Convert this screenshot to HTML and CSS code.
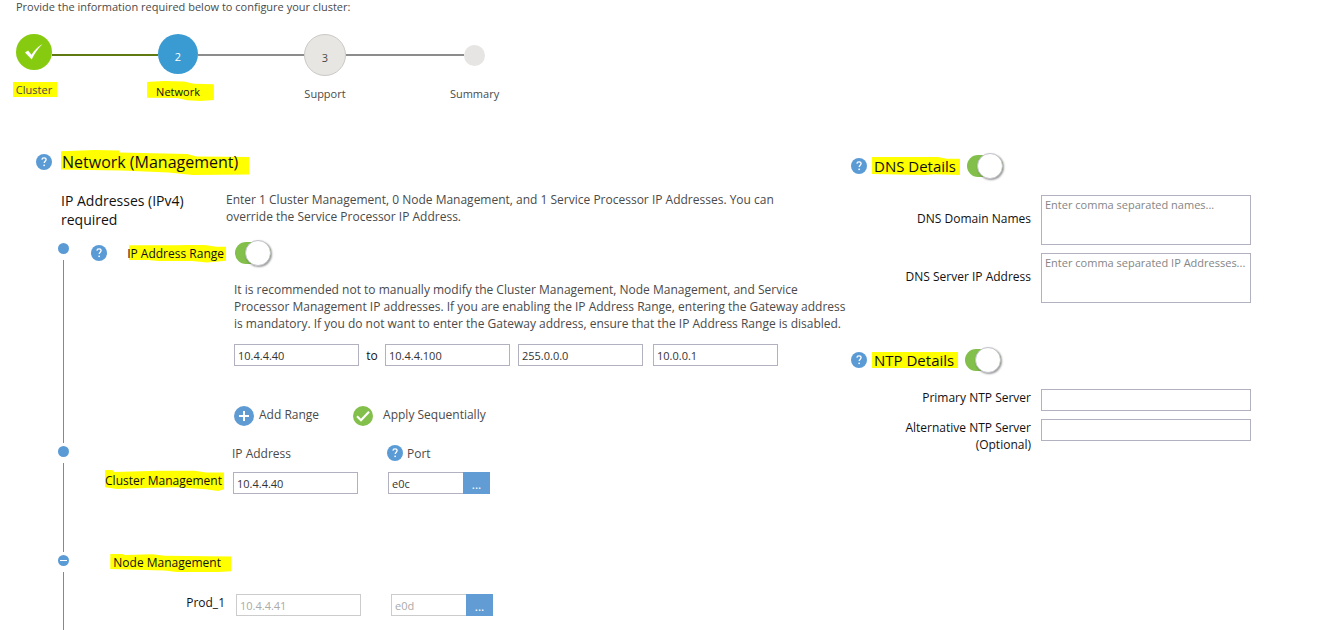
FILE: index.html
```html
<!DOCTYPE html>
<html lang="en">
<head>
    <meta charset="UTF-8">
    <meta name="viewport" content="width=device-width, initial-scale=1.0">
    <title>Cluster Setup - Network</title>
    <link rel="stylesheet" href="styles.css">
</head>
<body>
    <svg width="0" height="0" class="sprite" aria-hidden="true">
        <symbol id="icon-help" viewBox="0 0 16 16">
            <circle cx="8" cy="8" r="8" fill="#5b9bd5"/>
            <path d="M5.9 5.6C6 4.4 6.9 3.8 8 3.8s2.1.7 2.1 1.8c0 1.5-1.9 1.7-1.9 3.4" fill="none" stroke="#fff" stroke-width="1.3"/>
            <rect x="7.4" y="10.6" width="1.5" height="1.5" fill="#fff"/>
        </symbol>
    </svg>

    <p class="intro">Provide the information required below to configure your cluster:</p>

    <ol class="stepper">
        <li>
            <span class="step step-done">
                <svg width="36" height="36" viewBox="0 0 36 36" aria-hidden="true">
                    <path d="M9 18.500l3-2 3.500 4.200C18 16.500 21.500 13 26.500 10 22 14.500 18.500 19.500 15.700 25.500z" fill="#fff"/>
                </svg>
            </span>
            <span class="step-label"><mark class="hl hl-cluster">Cluster</mark></span>
        </li>
        <li>
            <span class="step-line step-line-done"></span>
            <span class="step step-current">2</span>
            <span class="step-label step-label-current"><mark class="hl hl-network">Network</mark></span>
        </li>
        <li>
            <span class="step-line"></span>
            <span class="step step-next">3</span>
            <span class="step-label step-label-next">Support</span>
        </li>
        <li>
            <span class="step-line"></span>
            <span class="step step-last"></span>
            <span class="step-label step-label-next">Summary</span>
        </li>
    </ol>

    <main>
        <section class="management">
            <h2>
                <svg class="help" width="16" height="16"><use href="#icon-help"/></svg>
                <mark class="hl hl-management">Network (Management)</mark>
            </h2>

            <div class="requirements">
                <h3>IP Addresses (IPv4) required</h3>
                <p>Enter 1 Cluster Management, 0 Node Management, and 1 Service Processor IP Addresses. You can override the Service Processor IP Address.</p>
            </div>

            <ol class="timeline">
                <li class="range">
                    <span class="track"><span class="dot"></span></span>
                    <div class="range-head">
                        <svg class="help" width="16" height="16"><use href="#icon-help"/></svg>
                        <label for="ip-range"><mark class="hl hl-range">IP Address Range</mark></label>
                        <input type="checkbox" class="toggle" id="ip-range" checked>
                    </div>
                    <div class="range-body">
                        <p>It is recommended not to manually modify the Cluster Management, Node Management, and Service Processor Management IP addresses. If you are enabling the IP Address Range, entering the Gateway address is mandatory. If you do not want to enter the Gateway address, ensure that the IP Address Range is disabled.</p>
                        <div class="range-fields">
                            <input type="text" value="10.4.4.40" aria-label="Range start">
                            <span class="to">to</span>
                            <input type="text" value="10.4.4.100" aria-label="Range end">
                            <input type="text" class="netmask" value="255.0.0.0" aria-label="Subnet mask">
                            <input type="text" class="gateway" value="10.0.0.1" aria-label="Gateway">
                        </div>
                        <div class="range-actions">
                            <button type="button" class="action">
                                <svg width="20" height="20" viewBox="0 0 20 20" aria-hidden="true">
                                    <circle cx="10" cy="10" r="10" fill="#5f9bd3"/>
                                    <path d="M10 5v10M5 10h10" stroke="#fff" stroke-width="2"/>
                                </svg>
                                Add Range
                            </button>
                            <button type="button" class="action action-apply">
                                <svg width="20" height="20" viewBox="0 0 20 20" aria-hidden="true">
                                    <circle cx="10" cy="10" r="10" fill="#83bf4b"/>
                                    <path d="M4 10.300l4 3.900 8-8.400" fill="none" stroke="#fff" stroke-width="2.200"/>
                                </svg>
                                Apply Sequentially
                            </button>
                        </div>
                    </div>
                </li>

                <li class="cluster">
                    <span class="track"><span class="dot"></span></span>
                    <div class="columns">
                        <span class="column-ip">IP Address</span>
                        <svg class="help" width="16" height="16"><use href="#icon-help"/></svg>
                        <span class="column-port">Port</span>
                    </div>
                    <div class="row">
                        <label for="cluster-ip"><mark class="hl hl-cluster-management">Cluster Management</mark></label>
                        <input type="text" id="cluster-ip" value="10.4.4.40">
                        <span class="port">
                            <input type="text" value="e0c" aria-label="Cluster port">
                            <button type="button" aria-label="Choose cluster port">...</button>
                        </span>
                    </div>
                </li>

                <li class="nodes">
                    <span class="track"><span class="dot dot-minus"></span></span>
                    <h4><mark class="hl hl-node">Node Management</mark></h4>
                    <div class="row row-node">
                        <label for="node-ip">Prod_1</label>
                        <input type="text" id="node-ip" value="10.4.4.41" disabled>
                        <span class="port">
                            <input type="text" value="e0d" aria-label="Node port" disabled>
                            <button type="button" aria-label="Choose node port">...</button>
                        </span>
                    </div>
                </li>
            </ol>
        </section>

        <div class="services">
            <section class="dns">
                <h2>
                    <svg class="help" width="16" height="16"><use href="#icon-help"/></svg>
                    <label for="dns-on"><mark class="hl hl-dns">DNS Details</mark></label>
                    <input type="checkbox" class="toggle" id="dns-on" checked>
                </h2>
                <div class="field">
                    <label for="dns-names">DNS Domain Names</label>
                    <textarea id="dns-names" placeholder="Enter comma separated names..."></textarea>
                </div>
                <div class="field">
                    <label for="dns-ips">DNS Server IP Address</label>
                    <textarea id="dns-ips" placeholder="Enter comma separated IP Addresses..."></textarea>
                </div>
            </section>

            <section class="ntp">
                <h2>
                    <svg class="help" width="16" height="16"><use href="#icon-help"/></svg>
                    <label for="ntp-on"><mark class="hl hl-ntp">NTP Details</mark></label>
                    <input type="checkbox" class="toggle" id="ntp-on" checked>
                </h2>
                <div class="field">
                    <label for="ntp-primary">Primary NTP Server</label>
                    <input type="text" id="ntp-primary">
                </div>
                <div class="field">
                    <label for="ntp-alt">Alternative NTP Server (Optional)</label>
                    <input type="text" id="ntp-alt">
                </div>
            </section>
        </div>
    </main>
</body>
</html>
```
FILE: styles.css
```css
:root {
    --text: #4a4a4a;
    --strong: #111;
    --blue: #5b9bd5;
    --border: #b1b1c0;
    --highlight: #ff0;
}

* {
    box-sizing: border-box;
}

body {
    margin: 0;
    font-family: "Open Sans", sans-serif;
    font-size: 12px;
    line-height: 17px;
    color: var(--text);
    background: #fff;
}

h2, h3, h4, p, ol {
    margin: 0;
    padding: 0;
    font-weight: 400;
}

ol {
    list-style: none;
}

input, textarea, button {
    font: inherit;
    color: inherit;
}

.sprite {
    display: none;
}

.help {
    flex: none;
}

.intro {
    padding: 0 16px;
    height: 34px;
    font-size: 11px;
    line-height: 14px;
}

/* marker pen strokes behind the text */
.hl {
    position: relative;
    isolation: isolate;
    display: inline-block;
    color: inherit;
    background: none;
}

.hl::before {
    content: "";
    position: absolute;
    z-index: -1;
    inset: 0;
    background: var(--highlight);
}

.hl-cluster::before {
    inset: 0 -5px 1px -3px;
}

.hl-network::before {
    inset: -3px -14px -1px -9px;
    clip-path: polygon(0 5%, 25% 0, 55% 2%, 70% 14%, 100% 16%, 100% 95%, 80% 100%, 60% 96%, 45% 85%, 0 84%);
}

.hl-management::before {
    inset: -1px -11px -2px -1px;
    clip-path: polygon(0 5%, 18% 0, 31% 2%, 31% 10%, 67% 16%, 72% 26%, 100% 28%, 100% 98%, 70% 100%, 57% 90%, 32% 82%, 0 78%);
}

.hl-range::before {
    inset: 0 -2px -1px 2px;
    clip-path: polygon(0 4%, 50% 4%, 75% 0, 90% 12%, 100% 12%, 100% 90%, 80% 100%, 65% 92%, 30% 92%, 20% 86%, 0 86%);
}

.hl-cluster-management::before {
    inset: -2px -2px -2px 0;
    clip-path: polygon(0 0, 6% 0, 8% 10%, 45% 4%, 75% 4%, 85% 12%, 100% 12%, 100% 92%, 95% 100%, 85% 92%, 60% 82%, 40% 84%, 10% 90%, 0 82%);
}

.hl-node::before {
    inset: -1px -10px -2px -3px;
    clip-path: polygon(0 0, 10% 0, 12% 6%, 35% 2%, 45% 10%, 100% 14%, 100% 96%, 90% 100%, 55% 100%, 45% 92%, 0 84%);
}

.hl-dns::before {
    inset: 2px -4px 2px -2px;
    clip-path: polygon(0 0, 75% 0, 85% 10%, 100% 10%, 100% 100%, 70% 96%, 60% 100%, 0 94%);
}

.hl-ntp::before {
    inset: 3px -4px 3px -2px;
}

/* stepper */
.stepper {
    display: grid;
    grid-template-columns: 36px 106px 40px 106px 42px 118px 21px;
    grid-template-rows: 42px auto;
    align-items: center;
    justify-items: center;
    padding: 0 16px;
    font-size: 11px;
    line-height: 16px;
}

.stepper li {
    display: contents;
}

.step {
    grid-row: 1;
    display: flex;
    align-items: center;
    justify-content: center;
    border-radius: 50%;
}

.step-done {
    width: 36px;
    height: 36px;
    align-self: start;
    background: #87cb10;
}

.step-current {
    width: 40px;
    height: 40px;
    padding-top: 5px;
    align-self: start;
    color: #fff;
    background: #3a9bd2;
}

.step-next {
    width: 42px;
    height: 42px;
    padding-top: 5px;
    background: #e8e6e3;
    border: 1px solid #cbc9c6;
}

.step-last {
    width: 21px;
    height: 21px;
    background: #e6e5e3;
}

.step-line {
    grid-row: 1;
    width: 100%;
    height: 2px;
    background: #8c8c8c;
}

.step-line-done {
    background: #5f7a10;
}

.step-label {
    grid-row: 2;
    align-self: start;
    padding-top: 6px;
}

.stepper li:nth-child(1) .step-label { grid-column: 1; }
.stepper li:nth-child(2) .step-label { grid-column: 3; }
.stepper li:nth-child(3) .step-label { grid-column: 5; }
.stepper li:nth-child(4) .step-label { grid-column: 7; }

.step-label-current {
    padding-top: 8px;
    color: var(--strong);
}

.step-label-next {
    padding-top: 10px;
}

/* page columns */
main {
    display: grid;
    grid-template-columns: minmax(0, 1fr) 400px;
    padding: 50px 85px 0 36px;
}

h2 {
    display: flex;
    align-items: center;
    font-size: 16px;
    line-height: 22px;
    color: var(--strong);
}

.management h2 {
    gap: 10px;
    height: 20px;
}

.requirements {
    display: grid;
    grid-template-columns: 155px minmax(0, 1fr);
    gap: 10px;
    padding: 19px 60px 0 25px;
}

.requirements p {
    max-width: 560px;
}

h3 {
    font-size: 14px;
    line-height: 19px;
    color: var(--strong);
}

/* timeline */
.timeline {
    padding: 14px 0 0 22px;
}

.timeline > li {
    display: grid;
    grid-template-columns: 11px minmax(0, 1fr);
    grid-template-rows: auto 1fr;
}

.track {
    grid-row: 1 / span 2;
    display: flex;
    flex-direction: column;
    align-items: center;
    gap: 6px;
    padding-bottom: 3px;
}

.track::after {
    content: "";
    flex: 1;
    width: 1px;
    background: #888;
}

.nodes .track {
    padding-bottom: 0;
}

.dot {
    display: flex;
    align-items: center;
    justify-content: center;
    width: 11px;
    height: 11px;
    border-radius: 50%;
    background: var(--blue);
}

.dot-minus::after {
    content: "";
    width: 7px;
    height: 1px;
    background: #fff;
}

.range-head {
    display: flex;
    align-items: center;
    height: 20px;
    padding-left: 22px;
    color: var(--strong);
}

.range-head label {
    width: 117px;
    text-align: right;
}

.range-body {
    padding: 18px 0 20px 165px;
}

.range-fields {
    display: flex;
    align-items: center;
    padding-top: 12px;
}

input[type="text"] {
    width: 125px;
    height: 22px;
    padding: 0 3px;
    font-size: 11px;
    color: #333;
    background: #fff;
    border: 1px solid var(--border);
    border-radius: 0;
}

input[type="text"]:disabled {
    color: #aaa;
    border-color: #ccc;
}

.to {
    width: 26px;
    text-align: center;
    color: var(--strong);
}

.netmask {
    margin-left: 8px;
}

.gateway {
    margin-left: 10px;
}

.range-actions {
    display: flex;
    gap: 34px;
    padding-top: 40px;
}

.action {
    display: flex;
    align-items: flex-start;
    gap: 5px;
    padding: 0;
    background: none;
    border: 0;
}

.action-apply {
    gap: 10px;
}

.toggle {
    appearance: none;
    flex: none;
    display: flex;
    align-items: center;
    justify-content: flex-end;
    width: 36px;
    height: 22px;
    margin: 0 0 0 11px;
    border-radius: 11px;
    background: #83bf4b;
}

.toggle::before {
    content: "";
    flex: none;
    width: 24px;
    height: 24px;
    border-radius: 50%;
    background: #fff;
    border: 1px solid #c4c4cc;
    box-shadow: 1px 1px 2px rgba(0, 0, 0, 0.4);
}

.toggle:not(:checked) {
    justify-content: flex-start;
    background: #bbb;
}

.columns {
    display: flex;
    align-items: center;
    height: 14px;
    padding-left: 163px;
}

.column-ip {
    width: 155px;
}

.column-port {
    padding-left: 4px;
}

.row {
    display: flex;
    padding: 12px 0 61px;
}

.row > label {
    width: 153px;
    margin-right: 11px;
    text-align: right;
    color: var(--strong);
}

.port {
    display: flex;
    margin-left: 30px;
}

.port input[type="text"] {
    width: 75px;
    border-right: 0;
}

.port button {
    width: 27px;
    height: 22px;
    padding: 2px 0 0;
    color: #fff;
    background: #619dd4;
    border: 0;
}

h4 {
    width: 152px;
    line-height: 15px;
    text-align: right;
    color: var(--strong);
}

.row-node {
    padding: 24px 0 14px 3px;
}

/* DNS and NTP */
.services {
    padding-top: 2px;
}

.services h2 {
    gap: 7px;
    height: 24px;
    margin-bottom: 17px;
    font-size: 15px;
}

.services .toggle {
    margin-left: 4px;
}

.field {
    display: grid;
    grid-template-columns: 1fr 210px;
    gap: 10px;
    margin-bottom: 8px;
}

.field label {
    justify-self: end;
    max-width: 130px;
    text-align: right;
    color: var(--strong);
}

.dns .field label {
    padding-top: 15px;
}

.field input[type="text"] {
    width: 100%;
}

.field textarea {
    display: block;
    width: 100%;
    height: 50px;
    padding: 1px 3px;
    font-size: 11px;
    line-height: 16px;
    resize: none;
    border: 1px solid var(--border);
}

.field textarea::placeholder {
    color: #858585;
}

.ntp {
    padding-top: 37px;
}
```
